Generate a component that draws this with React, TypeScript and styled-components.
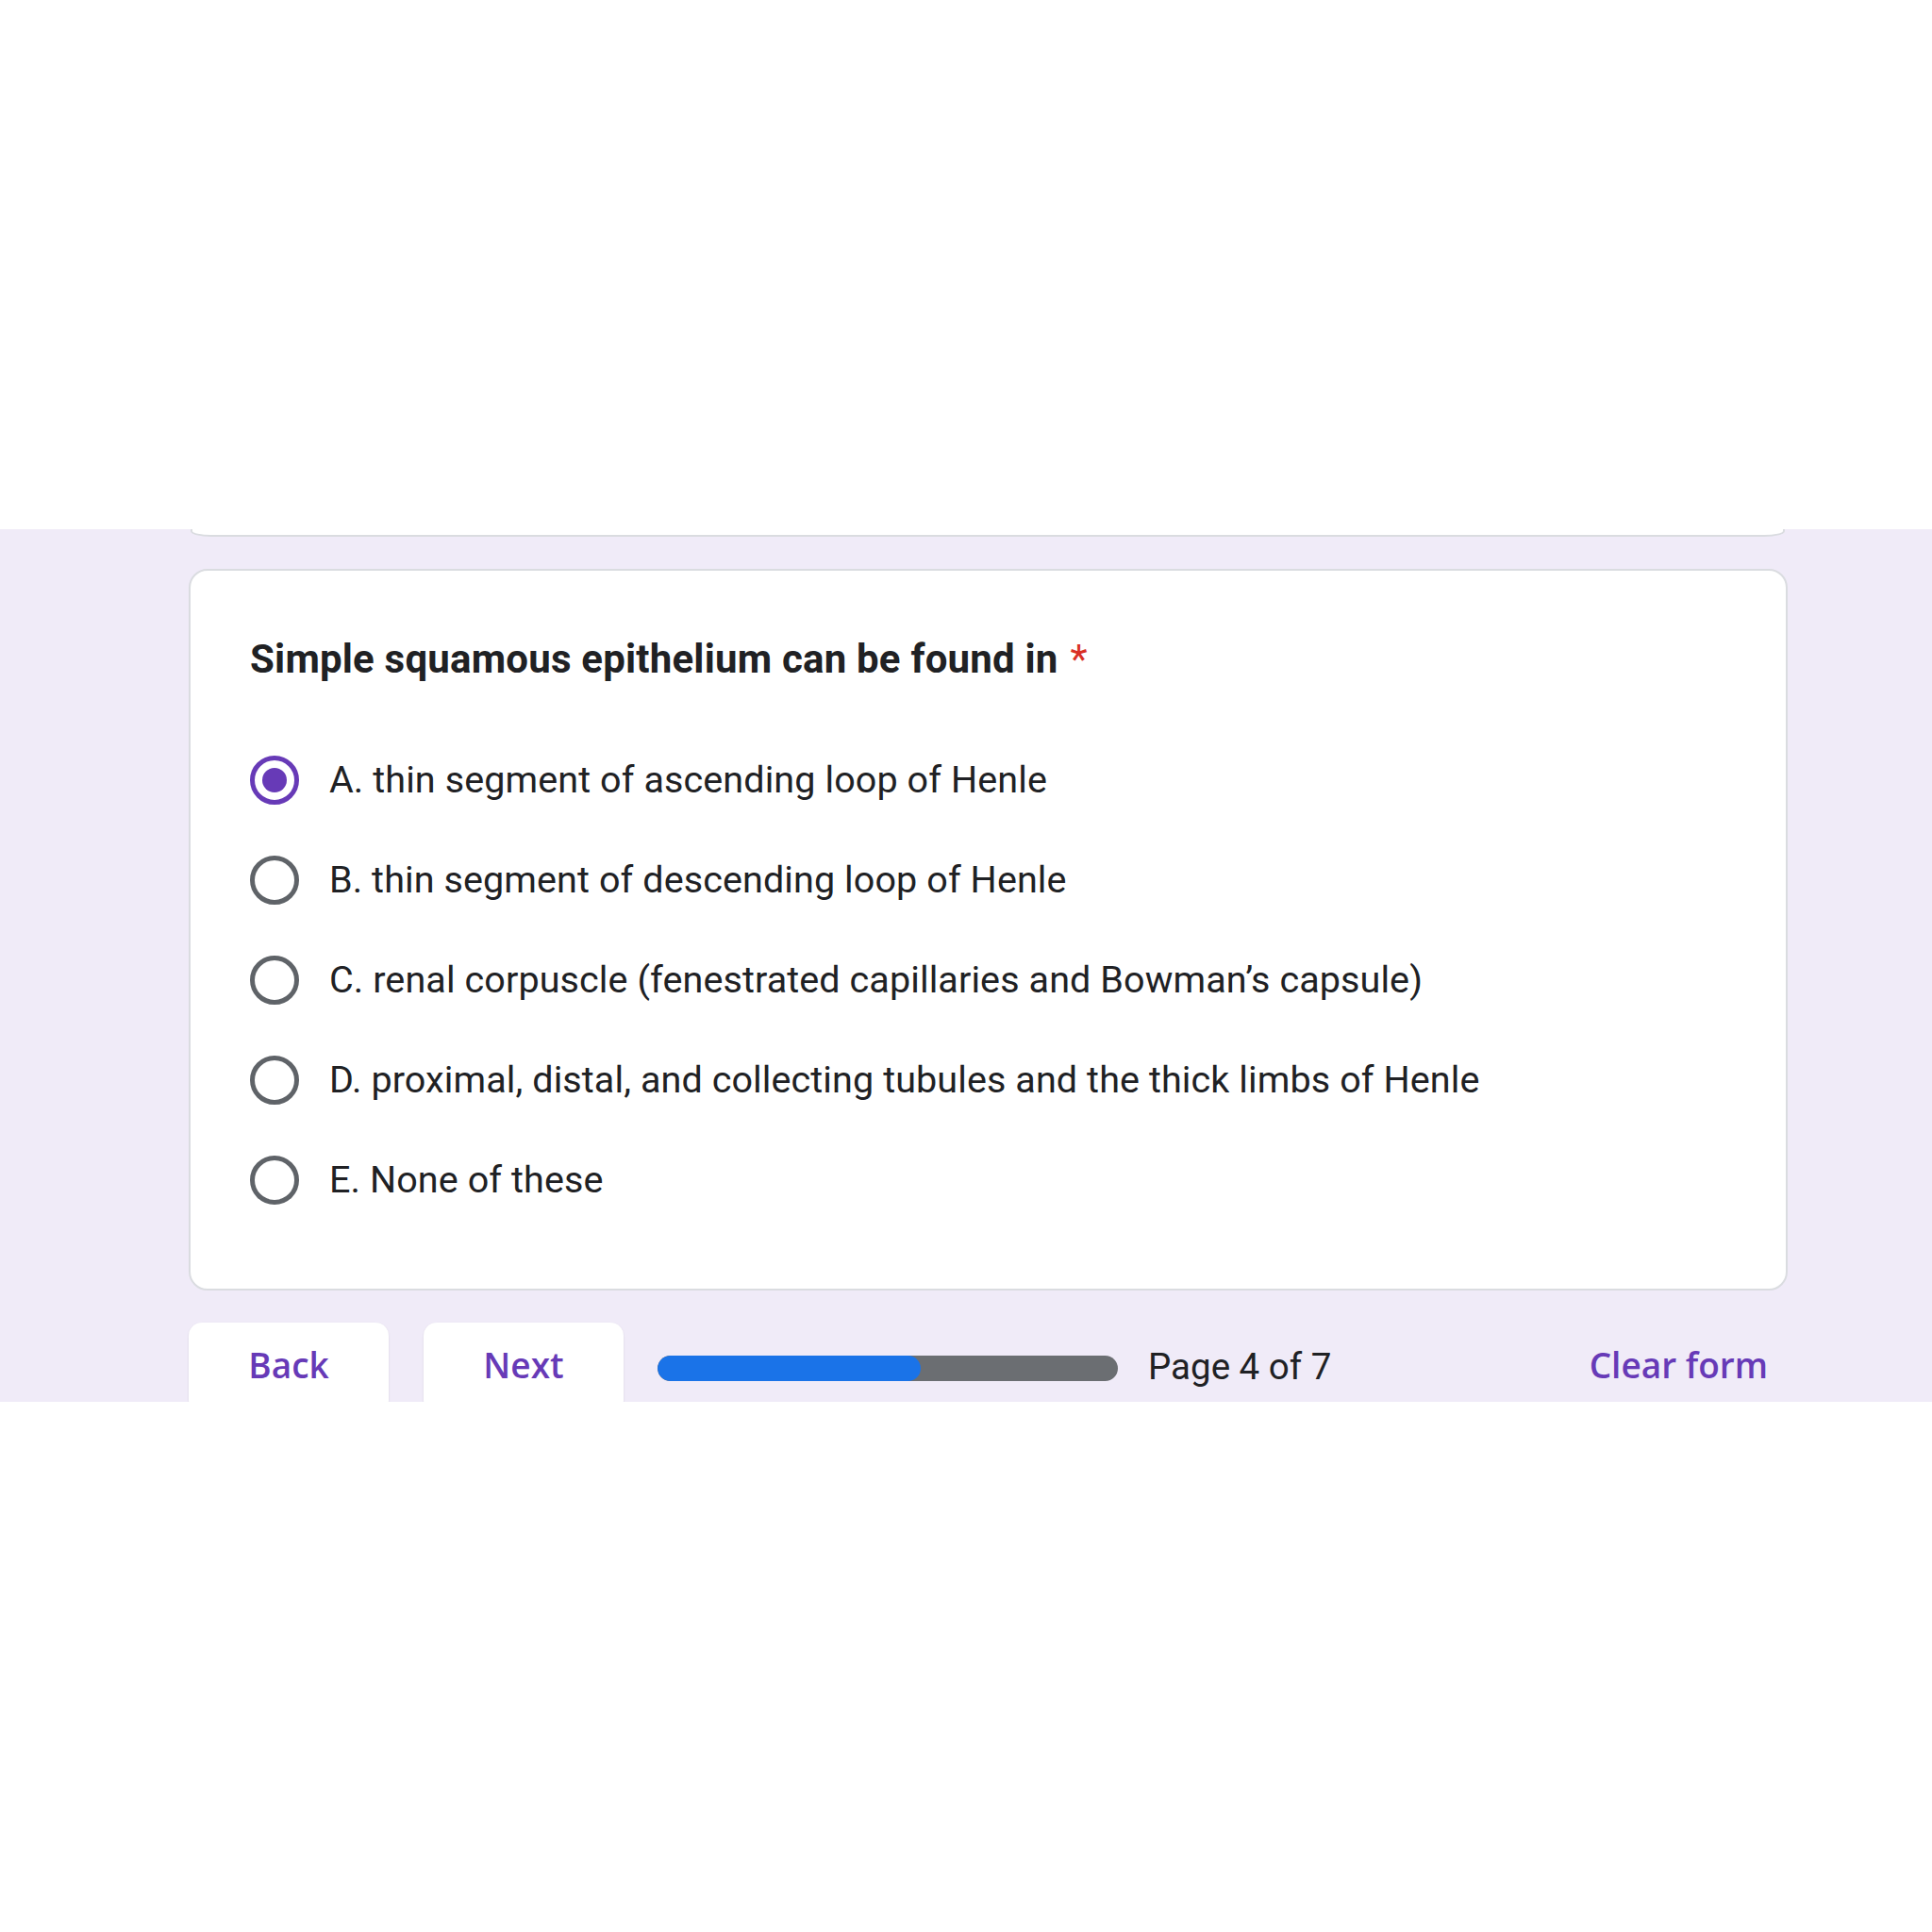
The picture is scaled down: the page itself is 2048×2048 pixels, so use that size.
import React from "react";
import styled, { createGlobalStyle } from "styled-components";

const GlobalStyle = createGlobalStyle`
  html, body {
    margin: 0;
    padding: 0;
    background: #ffffff;
  }
  body {
    font-family: Roboto, "Liberation Sans", Arial, sans-serif;
    color: #202124;
  }
`;

const options = [
  "A. thin segment of ascending loop of Henle",
  "B. thin segment of descending loop of Henle",
  "C. renal corpuscle (fenestrated capillaries and Bowman\u2019s capsule)",
  "D. proximal, distal, and collecting tubules and the thick limbs of Henle",
  "E. None of these",
];

const App = () => {
  const selected = 0;
  const page = 4;
  const total = 7;

  return (
    <Screen>
      <GlobalStyle />
      <TopSpace />
      <Band>
        <PrevCardTail />
        <Card>
          <Title>
            Simple squamous epithelium can be found in
            <Required>*</Required>
          </Title>
          <OptionList>
            {options.map((label, i) => (
              <Option key={label}>
                <Radio $checked={i === selected} />
                <OptionLabel>{label}</OptionLabel>
              </Option>
            ))}
          </OptionList>
        </Card>
        <Nav>
          <NavButton>Back</NavButton>
          <NavButton>Next</NavButton>
          <Progress>
            <ProgressFill style={{ width: `${(page / total) * 100}%` }} />
          </Progress>
          <PageLabel>
            Page {page} of {total}
          </PageLabel>
          <ClearButton>Clear form</ClearButton>
        </Nav>
      </Band>
    </Screen>
  );
};

export default App;

const Screen = styled.div`
  width: 2048px;
  height: 2048px;
  display: flex;
  flex-direction: column;
  background: #ffffff;
  overflow: hidden;
`;

const TopSpace = styled.div`
  height: 561px;
  flex-shrink: 0;
`;

const Band = styled.div`
  height: 925px;
  flex-shrink: 0;
  background: #f0ebf8;
  padding: 0 153px 0 200px;
  display: flex;
  flex-direction: column;
  overflow: hidden;
`;

const PrevCardTail = styled.div`
  height: 6px;
  margin: 0 3px 0 2px;
  background: #ffffff;
  border: 2px solid #dadce0;
  border-top: none;
  border-radius: 0 0 22px 22px / 0 0 6px 6px;
  flex-shrink: 0;
`;

const Card = styled.div`
  margin-top: 34px;
  height: 765px;
  box-sizing: border-box;
  background: #ffffff;
  border: 2px solid #dadce0;
  border-radius: 20px;
  padding: 66px 63px 0 63px;
  flex-shrink: 0;
`;

const Title = styled.h2`
  margin: 0;
  font-size: 42px;
  line-height: 56px;
  font-weight: 700;
  color: #202124;
  letter-spacing: 0.2px;
`;

const Required = styled.span`
  color: #d93025;
  font-weight: 400;
  margin-left: 13px;
`;

const OptionList = styled.div`
  margin-top: 47px;
  display: flex;
  flex-direction: column;
`;

const Option = styled.label`
  height: 106px;
  display: flex;
  align-items: center;
  gap: 32px;
`;

const Radio = styled.span<{ $checked?: boolean }>`
  width: 52px;
  height: 52px;
  box-sizing: border-box;
  border-radius: 50%;
  border: 5px solid ${(p) => (p.$checked ? "#673ab7" : "#5f6368")};
  display: flex;
  align-items: center;
  justify-content: center;
  flex-shrink: 0;

  &::after {
    content: "";
    width: 26px;
    height: 26px;
    border-radius: 50%;
    background: #673ab7;
    display: ${(p) => (p.$checked ? "block" : "none")};
  }
`;

const OptionLabel = styled.span`
  font-size: 39.5px;
  line-height: 52px;
  letter-spacing: 0.1px;
  color: #202124;
`;

const Nav = styled.div`
  margin-top: 34px;
  height: 96px;
  display: flex;
  align-items: center;
  flex-shrink: 0;
`;

const NavButton = styled.button`
  width: 212px;
  height: 96px;
  margin-right: 37px;
  border: none;
  border-radius: 14px;
  background: #ffffff;
  box-shadow: 0 1px 2px rgba(60, 64, 67, 0.15);
  color: #673ab7;
  font-family: "Open Sans", Roboto, sans-serif;
  font-size: 37px;
  font-weight: 600;
  padding: 0 0 8px 0;
  cursor: pointer;
  &:nth-of-type(2) {
    margin-right: 36px;
  }
`;

const Progress = styled.div`
  width: 488px;
  height: 27px;
  border-radius: 14px;
  background: #6b6e72;
  overflow: hidden;
  flex-shrink: 0;
`;

const ProgressFill = styled.div`
  height: 100%;
  background: #1a73e8;
  border-radius: 14px;
`;

const PageLabel = styled.span`
  margin-left: 32px;
  padding-bottom: 3px;
  font-size: 38.5px;
  color: #202124;
`;

const ClearButton = styled.button`
  margin-left: auto;
  border: none;
  background: transparent;
  padding: 0 21px 8px 0;
  color: #673ab7;
  font-family: "Open Sans", Roboto, sans-serif;
  font-size: 37px;
  font-weight: 600;
  cursor: pointer;
`;
